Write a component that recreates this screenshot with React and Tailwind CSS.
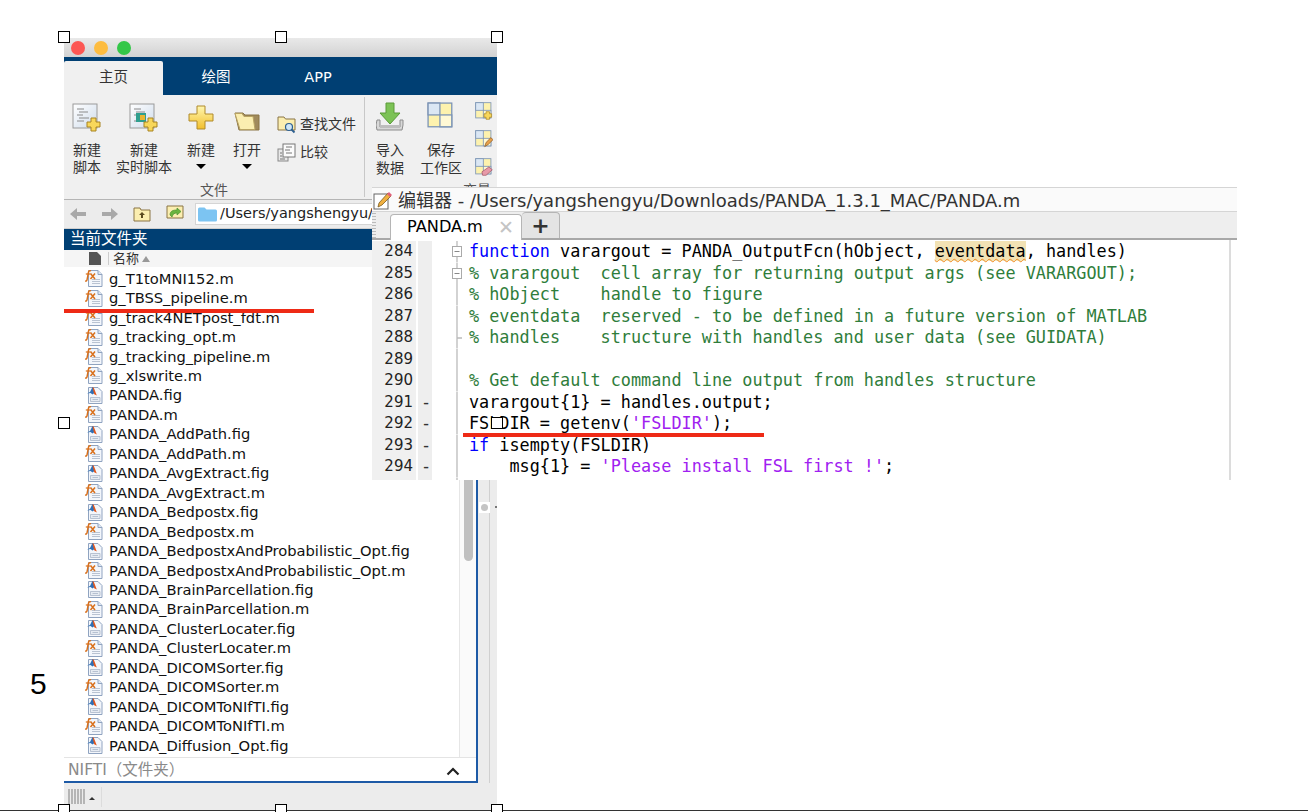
const UI_FONT = "font-['DejaVu_Sans','Noto_Sans_CJK_SC',sans-serif]";

const FILES = [
  "g_T1toMNI152.m", "g_TBSS_pipeline.m", "g_track4NETpost_fdt.m", "g_tracking_opt.m",
  "g_tracking_pipeline.m", "g_xlswrite.m", "PANDA.fig", "PANDA.m",
  "PANDA_AddPath.fig", "PANDA_AddPath.m", "PANDA_AvgExtract.fig", "PANDA_AvgExtract.m",
  "PANDA_Bedpostx.fig", "PANDA_Bedpostx.m", "PANDA_BedpostxAndProbabilistic_Opt.fig",
  "PANDA_BedpostxAndProbabilistic_Opt.m", "PANDA_BrainParcellation.fig", "PANDA_BrainParcellation.m",
  "PANDA_ClusterLocater.fig", "PANDA_ClusterLocater.m", "PANDA_DICOMSorter.fig", "PANDA_DICOMSorter.m",
  "PANDA_DICOMToNIfTI.fig", "PANDA_DICOMToNIfTI.m", "PANDA_Diffusion_Opt.fig",
];

const K = "text-[#0000ff]";
const C = "text-[#2f7d3b]";
const S = "text-[#a020f0]";

const CODE = [
  { n: 284, fold: "box", parts: [["function", K], [" varargout = PANDA_OutputFcn(hObject, "], ["eventdata", "hl"], [", handles)"]] },
  { n: 285, fold: "box", parts: [["% varargout  cell array for returning output args (see VARARGOUT);", C]] },
  { n: 286, fold: "line", parts: [["% hObject    handle to figure", C]] },
  { n: 287, fold: "line", parts: [["% eventdata  reserved - to be defined in a future version of MATLAB", C]] },
  { n: 288, fold: "end", parts: [["% handles    structure with handles and user data (see GUIDATA)", C]] },
  { n: 289, fold: "line", parts: [[" "]] },
  { n: 290, fold: "line", parts: [["% Get default command line output from handles structure", C]] },
  { n: 291, dash: true, fold: "line", parts: [["varargout{1} = handles.output;"]] },
  { n: 292, dash: true, fold: "line", parts: [["FSLDIR = getenv("], ["'FSLDIR'", S], [");"]] },
  { n: 293, dash: true, fold: "line", parts: [["if", K], [" isempty(FSLDIR)"]] },
  { n: 294, dash: true, fold: "line", parts: [["    msg{1} = "], ["'Please install FSL first !'", S], [";"]] },
  // next row is cut off by the window, only the gutter shows
  { n: "", fold: "line", parts: [[" "]] },
];

function FxIcon() {
  return (
    <svg width="20" height="19" viewBox="0 0 20 19" className="shrink-0">
      <path d="M4.500 1.500h9.500l4 4v12h-13.500z" fill="#f3f6fb" stroke="#8fa3c0" />
      <path d="M14 1.500v4h4" fill="#dfe7f3" stroke="#8fa3c0" />
      <path d="M8 10.500h8M8 12.500h8M8 14.500h8" stroke="#aab6c8" strokeWidth="0.800" />
      <path d="M7 1.800c-1.500-.5-2.300.3-2.600 1.800l-1.300 7c-.3 1.300-.8 1.700-2 1.400" fill="none" stroke="#d9701c" strokeWidth="1.500" />
      <path d="M1.800 5h4.600" stroke="#d9701c" strokeWidth="1.200" />
      <path d="M6.500 4.500l4.500 5.500M11 4.500l-4.500 5.500" stroke="#d9701c" strokeWidth="1.500" />
    </svg>
  );
}

function FigIcon() {
  return (
    <svg width="20" height="19" viewBox="0 0 20 19" className="shrink-0">
      <path d="M4.500 1.500h9.500l4 4v12h-13.500z" fill="#f3f6fb" stroke="#8fa3c0" />
      <path d="M6.500 11.500h9.500v4h-9.500z" fill="#e6ebf2" stroke="#aab6c8" strokeWidth="0.800" />
      <path d="M8.500 13.500h5.500" stroke="#aab6c8" strokeWidth="0.800" />
      <path d="M3 7.500l3-1.500 2.500-5 1 1 1 5-2 1.500-2-1.500z" fill="#2f6fb5" />
      <path d="M8.500 1l1.300.8 3 7.700-2.600-1.300-1-4z" fill="#e2571e" />
    </svg>
  );
}

function ScriptIcon({ live }) {
  return (
    <svg width="30" height="30" viewBox="0 0 30 30">
      <defs>
        <linearGradient id="pg" x1="0" y1="0" x2="1" y2="1">
          <stop offset="0" stopColor="#ffffff" />
          <stop offset="1" stopColor="#cfdcec" />
        </linearGradient>
      </defs>
      <rect x="1" y="1" width="24" height="24" fill="url(#pg)" stroke="#9a9a9a" />
      <path d="M5 6h7M7 9h9M5 12h6M7 15h10M5 18h7" stroke="#8a8a8a" strokeWidth="1" fill="none" />
      {live && <rect x="7" y="10" width="10" height="9" fill="#2f9f8f" />}
      {live && <rect x="11" y="12" width="5" height="5" fill="#e9b530" />}
      <path d="M19 15h5v4h4v5h-4v4h-5v-4h-4v-5h4z" fill="#f8d75a" stroke="#a88320" />
    </svg>
  );
}

function PlusIcon() {
  return (
    <svg width="28" height="28" viewBox="0 0 28 28">
      <defs>
        <linearGradient id="pl" x1="0" y1="0" x2="0" y2="1">
          <stop offset="0" stopColor="#fff7b0" />
          <stop offset="1" stopColor="#f2bf2c" />
        </linearGradient>
      </defs>
      <path d="M10 3h8v8h8v7h-8v8h-8v-8h-8v-7h8z" fill="url(#pl)" stroke="#b08a2a" />
    </svg>
  );
}

function OpenFolderIcon() {
  return (
    <svg width="26" height="20" viewBox="0 0 26 20" className="mt-[8px]">
      <path d="M1 2h8l2 2h14v15h-20z" fill="#a08a5c" stroke="#8a7445" />
      <path d="M1 2.500l5 16h15l-2-13h-9l-2-3z" fill="#fbeeb0" stroke="#b9a463" />
    </svg>
  );
}

function FindIcon() {
  return (
    <svg width="19" height="19" viewBox="0 0 19 19">
      <path d="M1 2h6l1.500 2h9.500v11h-17z" fill="#fbeeb0" stroke="#8a7445" />
      <circle cx="12" cy="12" r="3.500" fill="#cfe6f7" stroke="#2d5f8f" strokeWidth="1.200" />
      <path d="M14.500 14.500l3 3" stroke="#2d5f8f" strokeWidth="1.800" />
    </svg>
  );
}

function CompareIcon() {
  return (
    <svg width="19" height="19" viewBox="0 0 19 19">
      <rect x="1" y="6" width="10" height="12" fill="#e8e8e8" stroke="#888" />
      <rect x="6" y="1" width="12" height="13" fill="#fbfbfb" stroke="#777" />
      <path d="M9 4h6M8 7h5M9 10h6M3 10h2M3 13h2M3 16h5" stroke="#777" />
    </svg>
  );
}

function ImportIcon() {
  return (
    <svg width="28" height="30" viewBox="0 0 28 30">
      <path d="M1 18h3v7h20v-7h3v5l-1 5h-25l-1-5z" fill="#d8d8d8" stroke="#8c8c8c" />
      <rect x="4" y="23" width="20" height="3" fill="#bdbdbd" />
      <path d="M10 1h8v10h6l-10 11-10-11h6z" fill="#7cc255" stroke="#5a9a38" />
    </svg>
  );
}

function GridIcon({ children, size = 26 }) {
  return (
    <svg width={size} height={size} viewBox="0 0 26 26">
      <rect x="1" y="1" width="22" height="22" fill="#fdf2ae" stroke="#7c94b5" strokeWidth="1.200" />
      <rect x="1" y="1" width="11" height="11" fill="#dbe7f4" stroke="#7c94b5" strokeWidth="1.200" />
      <rect x="12" y="12" width="11" height="11" fill="#fff9d5" stroke="#7c94b5" strokeWidth="1.200" />
      {children}
    </svg>
  );
}

function Caret() {
  return <span className="mt-[5px] h-0 w-0 border-x-[5px] border-t-[5px] border-x-transparent border-t-black" />;
}

function LaunchBtn({ w, icon, children, caret }) {
  return (
    <div className={`flex flex-col items-center ${w} text-[14px] leading-[17px] text-[#333]`}>
      <div className="flex h-[34px] items-start justify-center">{icon}</div>
      {children}
      {caret && <Caret />}
    </div>
  );
}

function Ribbon() {
  return (
    <div className="flex h-[105px] shrink-0 bg-[#f0f0f0] border-b border-[#b5b5b5] overflow-hidden">
      <div className="flex w-[300px] shrink-0 flex-col">
        <div className="flex h-[87px] pt-[8px] pl-[2px]">
          <LaunchBtn w="w-[42px]" icon={<ScriptIcon />}>
            <span className="mt-[5px]">新建</span>
            <span>脚本</span>
          </LaunchBtn>
          <LaunchBtn w="w-[72px]" icon={<ScriptIcon live />}>
            <span className="mt-[5px]">新建</span>
            <span>实时脚本</span>
          </LaunchBtn>
          <LaunchBtn w="w-[42px]" icon={<PlusIcon />} caret>
            <span className="mt-[5px]">新建</span>
          </LaunchBtn>
          <LaunchBtn w="w-[50px]" icon={<OpenFolderIcon />} caret>
            <span className="mt-[5px]">打开</span>
          </LaunchBtn>
          <div className="ml-[5px] flex flex-col gap-[9px] pt-[12px] text-[14px] leading-[19px] text-[#333]">
            <div className="flex items-center gap-[4px]"><FindIcon />查找文件</div>
            <div className="flex items-center gap-[4px]"><CompareIcon />比较</div>
          </div>
        </div>
        <div className="text-center text-[14px] leading-[17px] text-[#555]">文件</div>
      </div>
      <div className="my-[2px] w-[1px] bg-[#c8c8c8]" />
      <div className="flex flex-1 flex-col">
        <div className="flex h-[87px] pt-[7px] pl-[2px]">
          <LaunchBtn w="w-[46px]" icon={<ImportIcon />}>
            <span className="mt-[6px]">导入</span>
            <span className="mt-[1px]">数据</span>
          </LaunchBtn>
          <LaunchBtn w="w-[56px]" icon={<GridIcon size={28} />}>
            <span className="mt-[6px]">保存</span>
            <span className="mt-[1px]">工作区</span>
          </LaunchBtn>
          <div className="ml-[6px] flex flex-col gap-[10px]">
            <GridIcon size={18}><path d="M16 14h5v3h3v5h-3v3h-5v-3h-3v-5h3z" fill="#f8d75a" stroke="#a88320" /></GridIcon>
            <GridIcon size={18}><path d="M14 24l2-6 7-7 3 3-7 7z" fill="#e8a04a" stroke="#8a5a20" /></GridIcon>
            <GridIcon size={18}><path d="M10 20l10-7 5 4-9 8h-5z" fill="#e79aa8" stroke="#a05060" /></GridIcon>
          </div>
        </div>
        <div className="pl-[98px] text-[14px] leading-[17px] text-[#555]">变量</div>
      </div>
    </div>
  );
}

function AddressBar() {
  return (
    <div className="flex h-[29px] shrink-0 items-center bg-[#ececec] pl-[5px] border-b border-[#cfcfcf]">
      <svg width="18" height="14" viewBox="0 0 18 14" className="mr-[14px]">
        <path d="M1 7l7-6v4h9v4h-9v4z" fill="#a9a9a9" />
      </svg>
      <svg width="18" height="14" viewBox="0 0 18 14" className="mr-[14px]">
        <path d="M17 7l-7-6v4h-9v4h9v4z" fill="#a9a9a9" />
      </svg>
      <svg width="18" height="16" viewBox="0 0 18 16" className="mr-[14px]">
        <path d="M1 2h6l1 2h9v11h-16z" fill="#fbeeb0" stroke="#8a7445" />
        <path d="M9 6l-3 3h2v3h2v-3h2z" fill="#5a4a20" />
      </svg>
      <svg width="20" height="18" viewBox="0 0 20 18" className="mr-[10px]">
        <path d="M2 1h16v12h-16z" fill="#fbeeb0" stroke="#8a7445" />
        <path d="M5 10c0-4 3-5 7-5v-2l4 3.500-4 3.500v-2c-3 0-4 1-5 4z" fill="#69b53f" stroke="#4e9030" strokeWidth="0.700" />
      </svg>
      <div className="flex h-[22px] flex-1 items-center bg-white border border-[#d5d5d5] overflow-hidden pl-[2px] text-[14.500px] text-[#222] whitespace-nowrap">
        <svg width="19" height="15" viewBox="0 0 19 15" className="mr-[3px] shrink-0">
          <path d="M0 2a1.500 1.500 0 0 1 1.500-1.500h5l2 2h9a1.500 1.500 0 0 1 1.500 1.500v9a1.500 1.500 0 0 1-1.500 1.500h-16a1.500 1.500 0 0 1-1.500-1.500z" fill="#7cc4f2" />
        </svg>
        /Users/yangshengyu/
      </div>
    </div>
  );
}

function FilePanel() {
  return (
    <div className="flex flex-1 min-h-0">
      <div className="flex w-[414px] shrink-0 flex-col border-r-2 border-b-2 border-[#1d5aa6] bg-white">
        <div className="flex h-[21px] shrink-0 items-center bg-[#003f73] pl-[6px] text-[15.500px] text-white">当前文件夹</div>
        <div className="flex h-[17px] shrink-0 items-center bg-[#f5f5f5] pl-[25px] text-[13px] text-[#333]">
          <svg width="12" height="13" viewBox="0 0 12 13"><path d="M0 0h8l4 4v9h-12z" fill="#555" /></svg>
          <span className="ml-[7px] mr-[4px] h-[13px] w-[1px] bg-[#ccc]" />
          名称
          <span className="ml-[3px] h-0 w-0 border-x-[4px] border-b-[6px] border-x-transparent border-b-[#999]" />
        </div>
        <div className="flex flex-1 min-h-0">
          <div className="flex-1 overflow-hidden pt-[2px] pl-[20px]">
            {FILES.map((f) => (
              <div key={f} className="flex h-[19.460px] items-center gap-[5px] text-[14.700px] text-[#111] whitespace-nowrap">
                {f.endsWith(".fig") ? <FigIcon /> : <FxIcon />}
                <span>{f}</span>
              </div>
            ))}
          </div>
          <div className="w-[17px] shrink-0 border-l border-[#e6e6e6] bg-[#fafafa] pt-[30px] pl-[4px] pb-[196px]">
            <div className="h-full w-[9px] rounded-full bg-[#c0c0c0]" />
          </div>
        </div>
        <div className="flex h-[24px] shrink-0 items-center justify-between border-t border-[#e4e4e4] bg-white pl-[4px] pr-[16px] pt-[3px] text-[15.500px] text-[#8a8a8a]">
          <span>NIFTI（文件夹）</span>
          <svg width="14" height="9" viewBox="0 0 14 9"><path d="M1.500 7.500l5.500-5.500 5.500 5.500" fill="none" stroke="#222" strokeWidth="2.200" /></svg>
        </div>
      </div>
      <div className="relative flex-1 bg-[#ececec]">
        <div className="ml-[11px] h-full w-[1px] bg-[#d0d0d0]" />
        <div className="absolute left-[1px] top-[273px] flex h-[11px] w-[11px] items-center justify-center bg-white">
          <span className="h-[7px] w-[7px] rounded-full bg-[#c4c4c4]" />
        </div>
        <span className="absolute left-[17px] top-[277px] h-[2px] w-[2px] bg-[#777]" />
      </div>
    </div>
  );
}

function StatusBar() {
  return (
    <div className="flex h-[27px] shrink-0 items-center bg-[#ececec] pl-[4px]">
      <div className="flex gap-[1.500px]">
        {[0, 1, 2, 3, 4, 5].map((i) => <span key={i} className="h-[15px] w-[1.500px] bg-[#b5b5b5]" />)}
      </div>
      <span className="ml-[4px] mt-[3px] h-0 w-0 border-x-[3px] border-b-[3px] border-x-transparent border-b-[#333]" />
      <span className="ml-[6px] h-[20px] w-[1px] bg-[#dcdcdc]" />
    </div>
  );
}

function FoldMark({ kind }) {
  return (
    <svg width="37" height="21.500" viewBox="0 0 37 21.500" className="shrink-0">
      <path d={kind === "end" ? "M25 0v21.500M25 11h5" : "M25 0v21.500"} stroke="#bbbbbb" strokeWidth="1.300" fill="none" />
      {kind === "box" && <rect x="20.500" y="5.500" width="9" height="10" fill="#fff" stroke="#aaa" />}
      {kind === "box" && <path d="M22.500 10.500h5" stroke="#888" />}
    </svg>
  );
}

function CodeLine({ line }) {
  return (
    <div className="flex h-[21.500px]">
      <div className="w-[44px] shrink-0 bg-[#f0f0f0] pr-[3px] text-right font-['DejaVu_Sans'] text-[15px] text-[#222]">{line.n}</div>
      <div className="ml-[2px] w-[14px] shrink-0 bg-[#eeeeee] pl-[3px] text-[#333]">{line.dash ? "-" : ""}</div>
      <FoldMark kind={line.fold} />
      <div className="whitespace-pre text-black">
        {line.parts.map(([t, cls], i) =>
          cls === "hl" ? (
            <span key={i} className="bg-[#f2e2b4] underline decoration-wavy decoration-1 decoration-[#f08a20]">{t}</span>
          ) : (
            <span key={i} className={cls}>{t}</span>
          ),
        )}
      </div>
    </div>
  );
}

function Editor() {
  return (
    <div className={`absolute left-[372px] top-[187px] z-10 flex h-[293px] w-[865px] flex-col bg-white ${UI_FONT}`}>
      <div className="flex h-[25px] shrink-0 items-center border-y border-[#d5d5d5] bg-[#fafafa] pt-[2px] text-[18px] text-[#333] whitespace-nowrap">
        <svg width="20" height="20" viewBox="0 0 20 20" className="ml-[1px] mr-[5px]">
          <rect x="1" y="3" width="14" height="15" fill="#fff" stroke="#666" />
          <path d="M5 16l1-4 9-10 3 3-9 9z" fill="#f0b040" stroke="#7a5a20" strokeWidth="0.800" />
          <path d="M14 3l2-2 3 3-2 2z" fill="#e0607a" />
        </svg>
        编辑器 - /Users/yangshengyu/Downloads/PANDA_1.3.1_MAC/PANDA.m
      </div>
      <div className="flex h-[28px] shrink-0 items-end border-b-2 border-[#a8a8a8] bg-[#eeeeee]">
        <div className="mr-[14px] h-full w-[4px] bg-[repeating-linear-gradient(0deg,#bbbbbb_0,#bbbbbb_1px,#eeeeee_1px,#eeeeee_3px)]" />
        <div className="flex h-[26px] w-[132px] items-center justify-between rounded-t-[4px] border-x border-t border-[#b5b5b5] bg-white px-[16px] pr-[7px] text-[16.200px] text-black -mb-[2px]">
          PANDA.m
          <span className="text-[19px] leading-none text-[#c4c4c4]">✕</span>
        </div>
        <div className="flex h-[26px] w-[38px] items-center justify-center rounded-t-[4px] border-r border-t border-[#b5b5b5] bg-[#e4e4e4] text-[22px] font-bold leading-none text-[#333]">+</div>
      </div>
      <div className="mr-[6px] flex-1 overflow-hidden border-r-2 border-[#dcdcdc] pt-[1px] font-['DejaVu_Sans_Mono'] text-[16.820px] leading-[21.500px]">
        {CODE.map((l) => <CodeLine key={l.n} line={l} />)}
      </div>
    </div>
  );
}

function Handle({ className }) {
  return <div className={`absolute z-20 h-[12px] w-[12px] border border-black bg-white ${className}`} />;
}

export default function App() {
  return (
    <div className={`relative h-[812px] w-[1308px] overflow-hidden bg-white ${UI_FONT}`}>
      <div className="absolute left-[64px] top-[38px] flex h-[772px] w-[433px] flex-col overflow-hidden bg-[#ececec]">
        <div className="flex h-[19px] shrink-0 items-center gap-[9px] bg-gradient-to-b from-[#e9e9e9] to-[#d2d2d2] pl-[7px]">
          <span className="h-[14px] w-[14px] rounded-full bg-[#fc5753]" />
          <span className="h-[14px] w-[14px] rounded-full bg-[#fdbc40]" />
          <span className="h-[14px] w-[14px] rounded-full bg-[#33c748]" />
        </div>
        <div className="flex h-[38px] shrink-0 items-end bg-[#003f73] text-[14.500px]">
          <div className="flex h-[34px] w-[99px] items-center justify-center rounded-t-[2px] bg-[#f0f0f0] text-[#333]">主页</div>
          <div className="flex h-[34px] w-[106px] items-center justify-center text-white">绘图</div>
          <div className="flex h-[34px] w-[98px] items-center justify-center text-white">APP</div>
        </div>
        <Ribbon />
        <AddressBar />
        <FilePanel />
        <StatusBar />
      </div>

      <Editor />

      <div className="absolute left-[64px] top-[309px] z-20 h-[4px] w-[250px] bg-[#ee2a16]" />
      <div className="absolute left-[463px] top-[433px] z-20 h-[4px] w-[301px] bg-[#ee2a16]" />

      <div className="absolute left-[30px] top-[666px] font-['Liberation_Sans'] text-[30px] leading-[36px] text-black">5</div>
      <div className="absolute bottom-[1px] left-0 h-[1px] w-full bg-[#333]" />

      <Handle className="left-[58px] top-[31px]" />
      <Handle className="left-[275px] top-[31px]" />
      <Handle className="left-[491px] top-[31px]" />
      <Handle className="left-[58px] top-[417px]" />
      <Handle className="left-[491px] top-[417px]" />
      <Handle className="left-[58px] top-[804px]" />
      <Handle className="left-[275px] top-[804px]" />
      <Handle className="left-[491px] top-[804px]" />
    </div>
  );
}
